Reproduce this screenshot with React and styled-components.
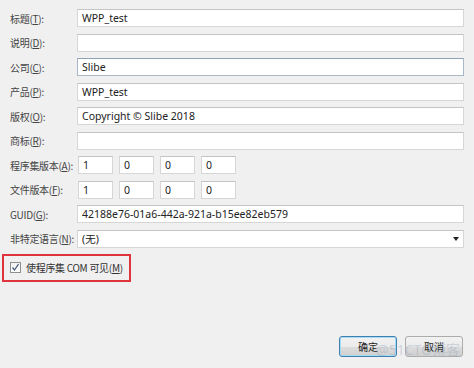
import React from 'react';
import styled, { createGlobalStyle } from 'styled-components';

const GlobalStyle = createGlobalStyle`
  html, body {
    margin: 0;
    padding: 0;
    background: #f0f0f0;
  }
`;

const Window = styled.div`
  position: relative;
  width: 474px;
  height: 368px;
  box-sizing: border-box;
  background: #f0f0f0;
  font-family: 'Noto Sans CJK SC', 'Noto Sans', sans-serif;
  font-size: 10px;
  color: #333;
  padding: 9px 10px 0 10px;
  display: flex;
  flex-direction: column;
`;

const Form = styled.div`
  display: grid;
  grid-template-columns: 67px 1fr;
  grid-auto-rows: 18px;
  row-gap: 6.5px;
  align-items: center;
`;

const Label = styled.label`
  white-space: nowrap;
  color: #444;
  font-size: 10px;
  letter-spacing: -0.3px;
`;

const Key = styled.span`
  text-decoration: underline;
`;

const Field = styled.div`
  height: 18px;
  box-sizing: border-box;
  background: #fff;
  border: 1px solid ${p => (p.$focus ? '#a9b8c8' : '#d6d6d6')};
  border-top-color: ${p => (p.$focus ? '#8ea3b9' : '#c4c4c4')};
  padding: 0 4px;
  display: flex;
  align-items: center;
  justify-content: space-between;
  font-family: 'Noto Sans', 'Noto Sans CJK SC', sans-serif;
  font-size: 10.5px;
  color: #222;
`;

const Versions = styled.div`
  display: flex;
  gap: 6px;
  margin-left: 1px;
`;

const Part = styled(Field)`
  width: 35px;
`;

const Arrow = styled.span`
  width: 0;
  height: 0;
  border-left: 3px solid transparent;
  border-right: 3px solid transparent;
  border-top: 4px solid #222;
`;

const CheckRow = styled.div`
  margin: 6px 0 0 -8px;
  width: 129px;
  height: 28px;
  box-sizing: border-box;
  border: 2px solid #e0343c;
  display: flex;
  align-items: center;
  gap: 5px;
  padding-left: 6px;
  color: #333;
  white-space: nowrap;
  font-size: 10px;
  letter-spacing: -0.3px;
`;

const Box = styled.span`
  flex: none;
  width: 11px;
  height: 11px;
  box-sizing: border-box;
  border: 1px solid #8e8f8f;
  background: linear-gradient(#f2f2f2, #fdfdfd);
  display: flex;
  align-items: center;
  justify-content: center;
`;

const Footer = styled.div`
  margin-top: auto;
  margin-bottom: 11px;
  display: flex;
  justify-content: flex-end;
  gap: 8px;
  padding-right: 1px;
`;

const Button = styled.button`
  width: 58px;
  height: 21px;
  box-sizing: border-box;
  border-radius: 3px;
  border: 1px solid ${p => (p.$primary ? '#3c7fb1' : '#acacac')};
  box-shadow: ${p => (p.$primary ? 'inset 0 0 0 1px #a8dcf4' : 'none')};
  background: linear-gradient(#f2f2f2 0%, #ebebeb 50%, #dddddd 51%, #cfcfcf 100%);
  font-family: 'Noto Sans CJK SC', sans-serif;
  font-size: 10px;
  color: #222;
  padding: 0;
`;

const Watermark = styled.span`
  position: absolute;
  right: 14px;
  bottom: 9px;
  font-family: 'Noto Sans', 'Noto Sans CJK SC', sans-serif;
  font-size: 14px;
  color: rgba(150, 165, 185, 0.4);
  pointer-events: none;
`;

const Check = () => (
  <svg width="9" height="9" viewBox="0 0 9 9">
    <path d="M1.5 4.5 L3.5 7 L7.5 1.2" fill="none" stroke="#4a5f80" strokeWidth="1.3" />
  </svg>
);

const rows = [
  { label: '标题', key: 'T', value: 'WPP_test' },
  { label: '说明', key: 'D', value: '' },
  { label: '公司', key: 'C', value: 'Slibe', focus: true },
  { label: '产品', key: 'P', value: 'WPP_test' },
  { label: '版权', key: 'O', value: 'Copyright © Slibe 2018' },
  { label: '商标', key: 'R', value: '' },
];

const LabelText = ({ text, k }) => (
  <Label>
    {text}(<Key>{k}</Key>):
  </Label>
);

export default function App() {
  return (
    <Window>
      <GlobalStyle />
      <Form>
        {rows.map(r => (
          <React.Fragment key={r.key}>
            <LabelText text={r.label} k={r.key} />
            <Field $focus={r.focus}>{r.value}</Field>
          </React.Fragment>
        ))}
        <LabelText text="程序集版本" k="A" />
        <Versions>
          {['1', '0', '0', '0'].map((v, i) => (
            <Part key={i}>{v}</Part>
          ))}
        </Versions>
        <LabelText text="文件版本" k="F" />
        <Versions>
          {['1', '0', '0', '0'].map((v, i) => (
            <Part key={i}>{v}</Part>
          ))}
        </Versions>
        <LabelText text="GUID" k="G" />
        <Field>42188e76-01a6-442a-921a-b15ee82eb579</Field>
        <LabelText text="非特定语言" k="N" />
        <Field>
          <span>(无)</span>
          <Arrow />
        </Field>
      </Form>
      <CheckRow>
        <Box>
          <Check />
        </Box>
        <span>
          使程序集 COM 可见(<Key>M</Key>)
        </span>
      </CheckRow>
      <Footer>
        <Button $primary>确定</Button>
        <Button>取消</Button>
      </Footer>
      <Watermark>@51CTO博客</Watermark>
    </Window>
  );
}
